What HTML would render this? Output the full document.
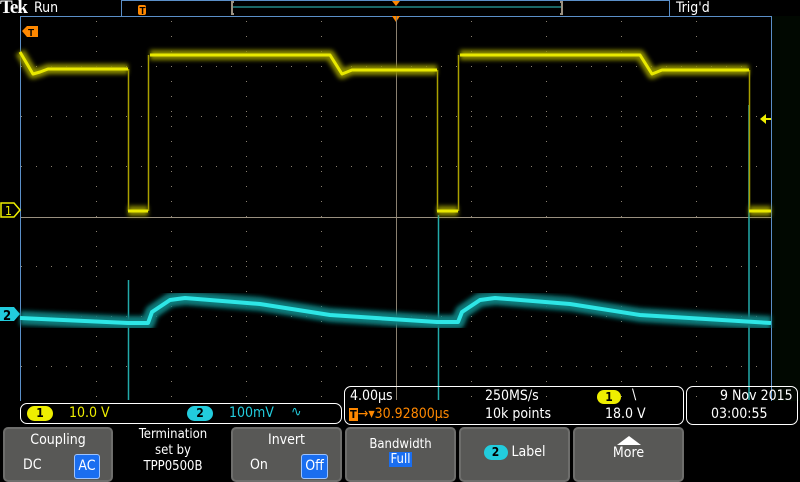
<!DOCTYPE html>
<html><head><style>
body{margin:0;background:#000;width:800px;height:480px;overflow:hidden;position:relative;font-family:"DejaVu Sans Condensed","Liberation Sans",sans-serif;color:#fff}
.a{position:absolute}
.btn{position:absolute;top:427px;height:55px;background:#585856;border:2px solid #6e6e6c;border-radius:5px;box-sizing:border-box;text-align:center;font-size:14px}
.box{position:absolute;border:1px solid #fff;border-radius:7px}
.pill{display:inline-block;border-radius:9px;font-weight:bold;color:#000;text-align:center}
.sel{position:absolute;background:#1a6ef0;border:1px solid #9cc3ff;border-radius:3px;color:#fff}
</style></head><body>
<svg class="a" style="left:0;top:0" width="800" height="480">
<defs>
<filter id="g" x="-5%" y="-20%" width="110%" height="140%"><feGaussianBlur stdDeviation="2"/></filter>
</defs>
<rect x="0" y="0" width="800" height="480" fill="#000"/>
<rect x="772" y="16" width="28" height="385" fill="#010801"/>
<rect x="121.5" y="0.5" width="548" height="16" fill="none" stroke="#5b8fc8"/>
<line x1="232" y1="7" x2="562" y2="7" stroke="#3cc" stroke-width="1"/>
<path d="M234 2 H232 V14 H234 M560 2 H562 V14 H560" fill="none" stroke="#9a9080" stroke-width="2"/>
<rect x="138" y="5" width="8" height="10" rx="2" fill="#f80"/>
<text x="139.5" y="14" font-size="10" font-weight="bold" fill="#000" font-family="Liberation Sans">T</text>
<path d="M392 1 h8 l-4 5z" fill="#f80"/>
<path d="M20.5 401 V16.5 H771.5 V401" fill="none" stroke="#5b8fc8"/>
<path d="M392 16 h8 l-4 6z" fill="#f80"/>
<g stroke="#8a8070" stroke-width="1" stroke-dasharray="1 14">
<line x1="96.5" y1="21" x2="96.5" y2="400"/><line x1="171.5" y1="21" x2="171.5" y2="400"/><line x1="246.5" y1="21" x2="246.5" y2="400"/><line x1="321.5" y1="21" x2="321.5" y2="400"/>
<line x1="471.5" y1="21" x2="471.5" y2="400"/><line x1="546.5" y1="21" x2="546.5" y2="400"/><line x1="621.5" y1="21" x2="621.5" y2="400"/><line x1="696.5" y1="21" x2="696.5" y2="400"/>
<line x1="21" y1="66.5" x2="771" y2="66.5"/><line x1="21" y1="116.5" x2="771" y2="116.5"/><line x1="21" y1="166.5" x2="771" y2="166.5"/>
<line x1="21" y1="266.5" x2="771" y2="266.5"/><line x1="21" y1="316.5" x2="771" y2="316.5"/><line x1="21" y1="366.5" x2="771" y2="366.5"/>
</g>
<line x1="396.5" y1="16" x2="396.5" y2="400" stroke="#8a8070"/>
<line x1="21" y1="217.5" x2="771" y2="217.5" stroke="#9a9080"/>
<g stroke="#2aa" stroke-width="1.5">
<line x1="128.5" y1="280" x2="128.5" y2="400"/><line x1="438.5" y1="215" x2="438.5" y2="400"/><line x1="749" y1="105" x2="749" y2="400"/>
</g>
<g stroke="#aaa000" stroke-width="1.5">
<line x1="128.5" y1="69" x2="128.5" y2="211"/><line x1="148.5" y1="55" x2="148.5" y2="211"/>
<line x1="437.5" y1="70" x2="437.5" y2="211"/><line x1="458.5" y1="55" x2="458.5" y2="211"/>
<line x1="749.5" y1="70" x2="749.5" y2="211"/>
</g>
<g fill="none" stroke-linejoin="round">
<path d="M20 52 L33 74 L40 72 L48 69 L128 69 M128 211 L148 211 M150 55 L330 55 L342 74 L352 70 L437 70 M437 211 L458 211 M460 55 L640 55 L652 74 L662 70 L749 70 M749 211 L771 211" stroke="#8a8a00" stroke-width="10" filter="url(#g)"/>
<path d="M20 52 L33 74 L40 72 L48 69 L128 69 M128 211 L148 211 M150 55 L330 55 L342 74 L352 70 L437 70 M437 211 L458 211 M460 55 L640 55 L652 74 L662 70 L749 70 M749 211 L771 211" stroke="#e8e800" stroke-width="3"/>
<path d="M20 318 L128 323 L148 323 L152 312 L170 300 L185 298 L260 304 L330 315 L437 322 L458 322 L462 312 L480 300 L495 298 L570 304 L640 315 L771 323" stroke="#0a7a7a" stroke-width="14" filter="url(#g)"/>
<path d="M20 318 L128 323 L148 323 L152 312 L170 300 L185 298 L260 304 L330 315 L437 322 L458 322 L462 312 L480 300 L495 298 L570 304 L640 315 L771 323" stroke="#2ee6e6" stroke-width="4"/>
</g>
<path d="M22 31 L27 26 H38 V37 H27 Z" fill="#f80"/>
<text x="28" y="36" font-size="10" font-weight="bold" fill="#000" font-family="Liberation Sans">T</text>
<path d="M1 203 H14 L20 210 L14 217 H1 Z" fill="#000" stroke="#ee0" stroke-width="1.5"/>
<text x="5" y="215" font-size="12" fill="#ee0">1</text>
<path d="M0 307 H14 L20 314 L14 321 H0 Z" fill="#2cd"/>
<text x="3" y="320" font-size="13" font-weight="bold" fill="#000">2</text>
<path d="M760 119 L766 114 V124 Z M765 118 H771 V120 H765 Z" fill="#ee0"/>
</svg>
<div class="a" style="left:0;top:-3px;font-family:'Liberation Serif',serif;font-weight:bold;font-size:19px;letter-spacing:-1px">Tek</div>
<div class="a" style="left:34px;top:0;font-size:14px">Run</div>
<div class="a" style="left:676px;top:0;font-size:14px">Trig'd</div>

<div class="box" style="left:20px;top:403px;width:320px;height:19px;font-size:14px">
<span class="pill" style="position:absolute;left:6px;top:2px;width:26px;height:15px;background:#ee0;font-size:12px;line-height:15px">1</span>
<span class="a" style="left:48px;top:1px;color:#ee0">10.0 V</span>
<span class="pill" style="position:absolute;left:166px;top:2px;width:26px;height:15px;background:#2cd;font-size:12px;line-height:15px">2</span>
<span class="a" style="left:208px;top:1px;color:#2cd">100mV</span>
<span class="a" style="left:270px;top:0;color:#2cd">∿</span>
</div>
<div class="box" style="left:344px;top:386px;width:338px;height:37px;font-size:14px">
<span class="a" style="left:5px;top:1px">4.00µs</span>
<span class="a" style="left:4px;top:19px;color:#f80"><span style="background:#f80;color:#000;font-weight:bold;font-size:11px;padding:0 1px">T</span>→▾30.92800µs</span>
<span class="a" style="left:140px;top:1px">250MS/s</span>
<span class="a" style="left:140px;top:19px">10k points</span>
<span class="pill" style="position:absolute;left:252px;top:3px;width:24px;height:14px;background:#ee0;font-size:12px;line-height:14px">1</span>
<span class="a" style="left:287px;top:0">\</span>
<span class="a" style="left:260px;top:19px">18.0 V</span>
</div>
<div class="box" style="left:686px;top:386px;width:110px;height:37px;font-size:14px">
<span class="a" style="left:33px;top:1px">9 Nov 2015</span>
<span class="a" style="left:24px;top:19px">03:00:55</span>
</div>

<div class="btn" style="left:3px;width:110px"><div style="margin-top:3px">Coupling</div><div class="a" style="left:18px;top:28px">DC</div><div class="sel" style="left:69px;top:25px;width:24px;height:23px;line-height:23px">AC</div></div>
<div class="a" style="left:115px;top:427px;width:116px;text-align:center;font-size:13px;line-height:16px">Termination<br>set by<br>TPP0500B</div>
<div class="btn" style="left:231px;width:111px"><div style="margin-top:3px">Invert</div><div class="a" style="left:17px;top:28px">On</div><div class="sel" style="left:68px;top:25px;width:25px;height:23px;line-height:23px">Off</div></div>
<div class="btn" style="left:345px;width:111px;font-size:13px"><div style="margin-top:8px">Bandwidth</div><div style="display:inline-block;background:#1a6ef0;padding:0 2px;line-height:15px">Full</div></div>
<div class="btn" style="left:459px;width:111px"><div style="margin-top:15px"><span class="pill" style="width:24px;height:15px;background:#2cd;font-size:12px;line-height:15px">2</span> Label</div></div>
<div class="btn" style="left:573px;width:111px"><div style="margin:7px auto 0;width:0;height:0;border-left:12px solid transparent;border-right:12px solid transparent;border-bottom:9px solid #fff"></div><div>More</div></div>
</body></html>
